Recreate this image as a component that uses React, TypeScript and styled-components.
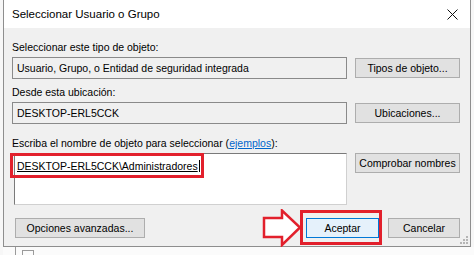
import styled, { createGlobalStyle } from "styled-components";

const GlobalStyle = createGlobalStyle`
  html, body {
    margin: 0;
    padding: 0;
    background: #f7f7f7;
    font-family: "Liberation Sans", Arial, sans-serif;
    font-size: 10.5px;
    color: #000;
  }
`;

const Page = styled.div`
  width: 474px;
  height: 255px;
  overflow: hidden;
  padding-left: 3px;
  box-sizing: border-box;
`;

const Dialog = styled.div`
  position: relative;
  width: 468px;
  border: 1px solid #8e8e8e;
  border-top: none;
  background: #f0f0f0;
  box-sizing: border-box;
`;

const TitleBar = styled.div`
  height: 28px;
  background: #fff;
  display: flex;
  align-items: center;
  justify-content: space-between;
  padding: 0 12px 0 8px;
  font-size: 11.5px;
`;

const Body = styled.div`
  padding: 12px 10px 8px 8px;
  display: flex;
  flex-direction: column;
`;

const Label = styled.div<{ $gap?: number }>`
  height: 14px;
  line-height: 14px;
  margin-top: ${(p) => p.$gap ?? 0}px;
  margin-bottom: 3px;
  white-space: nowrap;
`;

const Link = styled.span`
  color: #0066cc;
  text-decoration: underline;
`;

const Row = styled.div<{ $align?: string }>`
  display: grid;
  grid-template-columns: 1fr 105px;
  column-gap: 8px;
  align-items: ${(p) => p.$align ?? "center"};
`;

const ReadBox = styled.div`
  height: 22px;
  border: 1px solid #8a8a8a;
  background: #f0f0f0;
  box-sizing: border-box;
  padding: 0 4px;
  line-height: 20px;
  white-space: nowrap;
  overflow: hidden;
`;

const Button = styled.div<{ $w?: number; $primary?: boolean }>`
  height: 20px;
  width: ${(p) => (p.$w ? `${p.$w}px` : "auto")};
  box-sizing: border-box;
  border: 1px solid ${(p) => (p.$primary ? "#0078d7" : "#adadad")};
  background: ${(p) => (p.$primary ? "#e5f1fb" : "#e1e1e1")};
  display: flex;
  align-items: center;
  justify-content: center;
  white-space: nowrap;
`;

const InputWrap = styled.div`
  position: relative;
`;

const TextArea = styled.div`
  height: 52px;
  margin-left: 2px;
  border: 1px solid #7a7a7a;
  border-right-color: #d0d0d0;
  border-bottom-color: #d0d0d0;
  background: #fff;
  box-sizing: border-box;
  padding: 5px 0 0 2px;
  line-height: 14px;
`;

const Entered = styled.span`
  text-decoration: underline;
  border-right: 1px solid #000;
  padding-right: 1px;
`;

const Highlight = styled.div<{ $l: number; $t: number; $w: number; $h: number }>`
  position: absolute;
  left: ${(p) => p.$l}px;
  top: ${(p) => p.$t}px;
  width: ${(p) => p.$w}px;
  height: ${(p) => p.$h}px;
  border: 3px solid #e2202c;
  box-sizing: border-box;
  pointer-events: none;
`;

const Footer = styled.div`
  display: flex;
  align-items: center;
  margin-top: 13px;
  padding-left: 3px;
`;

const Spacer = styled.div`
  flex: 1;
`;

const AcceptWrap = styled.div`
  position: relative;
  margin-right: 9px;
`;

const Arrow = styled.svg`
  position: absolute;
  left: -44px;
  top: -9px;
`;

const Grip = styled.svg`
  position: absolute;
  right: 2px;
  bottom: 2px;
`;

const Backdrop = styled.div`
  height: 8px;
  display: flex;
  padding-left: 12px;
  gap: 6px;
  background: #fbfbfb;
`;

const BackLine = styled.div`
  width: 1px;
  background: #9a9a9a;
`;

const BackBox = styled.div`
  width: 10px;
  margin-top: 3px;
  border: 1px solid #9a9a9a;
  border-bottom: none;
`;

const CloseIcon = () => (
  <svg width="11" height="11" viewBox="0 0 11 11">
    <path d="M0.5 0.5 L10.5 10.5 M10.5 0.5 L0.5 10.5" stroke="#111" strokeWidth="1" />
  </svg>
);

export default function App() {
  return (
    <Page>
      <GlobalStyle />
      <Dialog>
        <TitleBar>
          <span>Seleccionar Usuario o Grupo</span>
          <CloseIcon />
        </TitleBar>
        <Body>
          <Label>Seleccionar este tipo de objeto:</Label>
          <Row>
            <ReadBox>Usuario, Grupo, o Entidad de seguridad integrada</ReadBox>
            <Button>Tipos de objeto...</Button>
          </Row>

          <Label $gap={6}>Desde esta ubicación:</Label>
          <Row>
            <ReadBox>DESKTOP-ERL5CCK</ReadBox>
            <Button>Ubicaciones...</Button>
          </Row>

          <Label $gap={12}>
            Escriba el nombre de objeto para seleccionar (<Link>ejemplos</Link>):
          </Label>
          <Row $align="start">
            <InputWrap>
              <TextArea>
                <Entered>DESKTOP-ERL5CCK\Administradores</Entered>
              </TextArea>
              <Highlight $l={-2} $t={0} $w={194} $h={25} />
            </InputWrap>
            <Button>Comprobar nombres</Button>
          </Row>

          <Footer>
            <Button $w={130}>Opciones avanzadas...</Button>
            <Spacer />
            <AcceptWrap>
              <Button $w={73} $primary>
                Aceptar
              </Button>
              <Highlight $l={-6} $t={-8} $w={82} $h={35} />
              <Arrow width="40" height="38" viewBox="0 0 40 38">
                <polygon
                  points="2,9 20,9 20,1.5 38,18.5 20,36 20,28 2,28"
                  fill="#fff"
                  stroke="#e2202c"
                  strokeWidth="2.5"
                  strokeLinejoin="miter"
                />
              </Arrow>
            </AcceptWrap>
            <Button $w={72}>Cancelar</Button>
          </Footer>
        </Body>
        <Grip width="8" height="8" viewBox="0 0 8 8">
          <rect x="6" y="0" width="2" height="2" fill="#b5b5b5" />
          <rect x="3" y="3" width="2" height="2" fill="#b5b5b5" />
          <rect x="6" y="3" width="2" height="2" fill="#b5b5b5" />
          <rect x="0" y="6" width="2" height="2" fill="#b5b5b5" />
          <rect x="3" y="6" width="2" height="2" fill="#b5b5b5" />
          <rect x="6" y="6" width="2" height="2" fill="#b5b5b5" />
        </Grip>
      </Dialog>
      <Backdrop>
        <BackLine />
        <BackBox />
      </Backdrop>
    </Page>
  );
}
